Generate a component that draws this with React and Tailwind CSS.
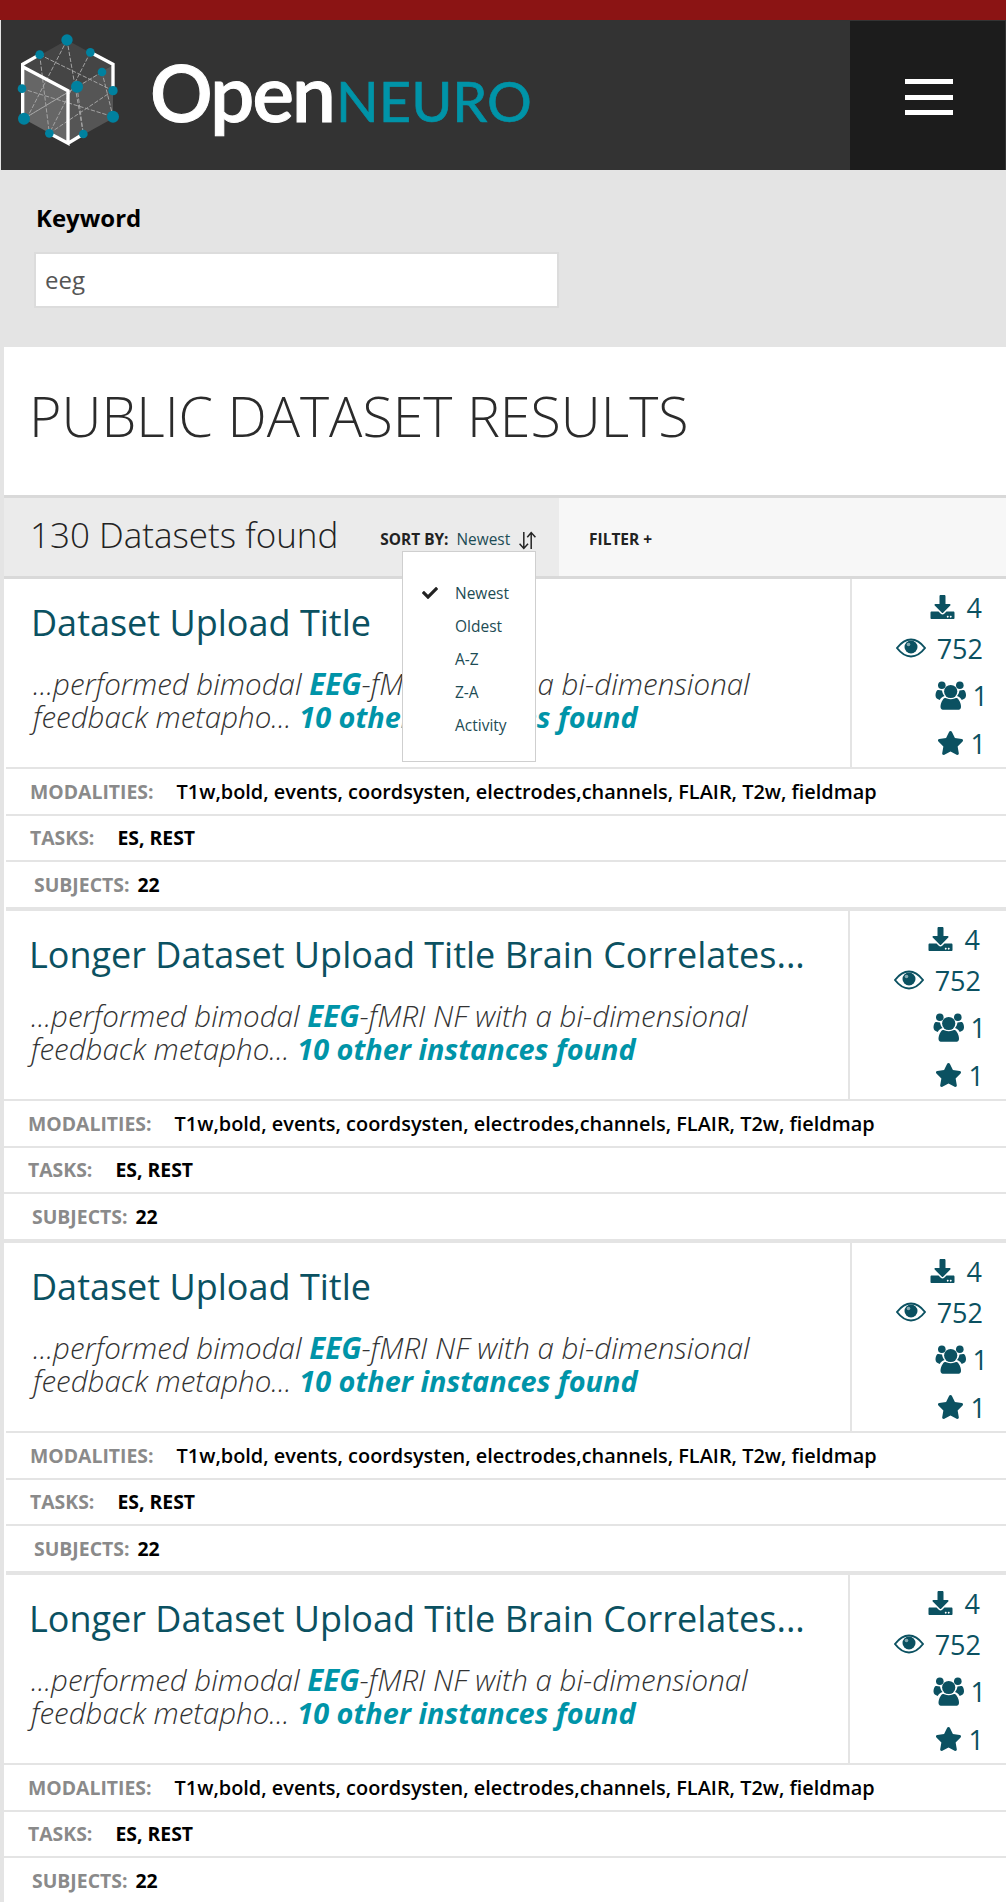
import React from "react";
import { FaDownload, FaStar, FaCheck } from "react-icons/fa";

function Logo() {
  const dashes = [
    "M201 60L80 296", "M201 60L250 342", "M119 104L148 340", "M119 104L339 212", "M271 97L148 340",
    "M306 156L72 296", "M306 156L339 290", "M66 206L339 290", "M72 296L231 200", "M339 212L148 340",
    "M231 200L250 342",
  ];
  const nodes = [
    [201, 60, 17], [119, 104, 13], [271, 97, 13], [306, 156, 13], [231, 200, 18], [339, 212, 14],
    [66, 206, 13], [72, 296, 18], [339, 290, 18], [148, 340, 13], [250, 342, 13],
  ];
  return (
    <svg viewBox="0 0 420 450" className="w-[140px] h-[150px] shrink-0 -ml-[1px]">
      <path d="M201 60L339 135L204 212L68 135Z" fill="#454545" />
      <path d="M68 140L204 212V370L68 295Z" fill="#666666" />
      <path d="M204 212L339 135V295L204 370Z" fill="#555555" />
      {dashes.map((d) => (
        <path key={d} d={d} stroke="#a3a3a3" strokeWidth="3" strokeDasharray="13 5" fill="none" />
      ))}
      <path
        d="M119 104L68 133V296M68 140L204 212V370L148 340M204 370L250 342M271 97L339 133V212"
        stroke="#ffffff"
        strokeWidth="10"
        fill="none"
      />
      {nodes.map(([x, y, r]) => (
        <circle key={x + "-" + y} cx={x} cy={y} r={r} fill="#00819f" />
      ))}
    </svg>
  );
}

function SortIcon() {
  return (
    <svg viewBox="0 0 18 18" className="w-[19px] h-[19px]" fill="none" stroke="#222" strokeWidth="1.4">
      <path d="M5.5 1V16M1.5 12L5.5 16.5L9.5 12" />
      <path d="M12.5 17V2M8.8 6L12.5 1.5L16.5 6" />
    </svg>
  );
}

function EyeIcon() {
  return (
    <svg viewBox="0 0 30 20" className="w-[30px] h-[20px]">
      <path
        d="M1 10C6 3.5 11 1.5 15 1.5S24 3.5 29 10C24 16.5 19 18.5 15 18.5S6 16.5 1 10Z"
        fill="none"
        stroke="currentColor"
        strokeWidth="2"
      />
      <circle cx="15" cy="9" r="6.5" fill="currentColor" />
      <circle cx="12.5" cy="6.5" r="1.8" fill="#ffffff" opacity="0.5" />
    </svg>
  );
}

function UsersIcon() {
  return (
    <svg viewBox="0 0 31 29" className="w-[31px] h-[29px]" fill="currentColor">
      <circle cx="15.7" cy="10.5" r="6.6" />
      <path d="M8 18.5C9 16.8 11 16.6 12 17.5C14 18.6 17.5 18.6 19.5 17.5C20.5 16.6 22.5 16.8 23.5 18.5C25.5 21 26 24 26 26C26 28 24.5 28.8 22.5 28.8H9C7 28.8 5.5 28 5.5 26C5.5 24 6 21 8 18.5Z" />
      <circle cx="6.8" cy="4.2" r="3.8" />
      <circle cx="24.8" cy="4.2" r="3.8" />
      <path d="M2 9.5C3 8.5 5 9.3 7 9.5C7.4 11.5 8 13.5 9.5 15C7 15.6 5.5 17.5 4.8 19C2.5 18.2 0.5 17 0.5 14.5C0.5 12.5 1 10.5 2 9.5Z" />
      <path d="M29.5 9.5C28.5 8.5 26.5 9.3 24.5 9.5C24.1 11.5 23.5 13.5 22 15C24.5 15.6 26 17.5 26.7 19C29 18.2 31 17 31 14.5C31 12.5 30.5 10.5 29.5 9.5Z" />
    </svg>
  );
}

function Stat({ h, icon, value, gap, pr }) {
  return (
    <div className={`flex items-center justify-end text-[27px] leading-none ${h} ${gap} ${pr}`}>
      {icon}
      <span>{value}</span>
    </div>
  );
}

function Card({ title, offset }) {
  return (
    <div className={offset ? "pl-[2px]" : ""}>
      <div className="flex">
        <div className="w-[846px] shrink-0 h-[188px] border-r-2 border-[#e4e4e4] pl-[25px] pt-[21px]">
          <div className="text-[#0b5161] text-[36px] leading-[46px] whitespace-nowrap">{title}</div>
          <div className="mt-[21px] pl-[2px] text-[29.5px] leading-[33px] italic font-light text-[#333333]">
            <div className="whitespace-nowrap">
              ...performed bimodal <b className="font-bold text-[#0094a8]">EEG</b>-fMRI NF with a bi-dimensional
            </div>
            <div className="whitespace-nowrap">
              <span className="tracking-[0.03px]">feedback metapho... </span>
              <b className="font-bold text-[28.9px] text-[#0094a8]">10 other instances found</b>
            </div>
          </div>
        </div>
        <div className="w-[138px] shrink-0 pt-[8px] flex flex-col items-end text-[#0b5161]">
          <Stat h="h-[40px]" pr="pr-[8px]" gap="gap-[11px]" icon={<FaDownload className="w-[27px] h-[24px]" />} value="4" />
          <Stat h="h-[42px]" pr="pr-[7px]" gap="gap-[11px]" icon={<EyeIcon />} value="752" />
          <Stat h="h-[52px]" pr="pr-[2px]" gap="gap-[7px]" icon={<UsersIcon />} value="1" />
          <Stat h="h-[44px]" pr="pr-[4px]" gap="gap-[7px]" icon={<FaStar className="w-[27px] h-[26px]" />} value="1" />
        </div>
      </div>
      <div className="text-[19.9px] font-semibold text-black">
        <div className="h-[47px] border-t-2 border-[#e4e4e4] pl-[24px] flex items-center gap-[23px] whitespace-nowrap">
          <span className="text-[19.4px] font-bold text-[#8a8a8a]">MODALITIES:</span>
          <span>T1w,bold, events, coordsysten, electrodes,channels, FLAIR, T2w, fieldmap</span>
        </div>
        <div className="h-[46px] border-t-2 border-[#e4e4e4] pl-[24px] flex items-center gap-[23px] text-[19.4px]">
          <span className="font-bold text-[#8a8a8a]">TASKS:</span>
          <span className="font-bold">ES, REST</span>
        </div>
        <div className="h-[47px] border-t-2 border-[#e4e4e4] pl-[28px] flex items-center gap-[8px] text-[19.4px]">
          <span className="font-bold text-[#8a8a8a]">SUBJECTS:</span>
          <span className="font-bold">22</span>
        </div>
      </div>
      <div className="h-[4px] bg-[#e4e4e4]" />
    </div>
  );
}

export default function App() {
  return (
    <div className="w-[1006px] h-[1902px] overflow-hidden bg-[#e4e4e4] font-['Open_Sans',sans-serif]">
      <div className="h-[20px] bg-[#8b1414]" />
      <div className="h-[150px] bg-[#333333] flex ml-[1px]">
        <Logo />
        <div className="flex items-baseline ml-[10px] mt-[33px] h-[110px] font-['Lato',sans-serif] leading-none">
          <span className="text-white text-[78px] font-semibold tracking-[-1.8px] [-webkit-text-stroke:1px_#ffffff]">Open</span>
          <span className="text-[#0094a8] text-[56px] font-normal ml-[2px] [-webkit-text-stroke:0.7px_#0094a8]">NEURO</span>
        </div>
        <div className="ml-auto w-[155px] mt-[1px] mr-[1px] bg-[#1c1c1c] flex flex-col items-center justify-center pl-[3px] pt-[3px]">
          <div className="w-[48px] h-[5px] bg-white" />
          <div className="w-[48px] h-[5px] bg-white mt-[11px]" />
          <div className="w-[48px] h-[5px] bg-white mt-[10px]" />
        </div>
      </div>
      <div className="h-[177px] pl-[36px] pt-[33px]">
        <div className="text-[24px] leading-[30px] font-bold text-black">Keyword</div>
        <div className="mt-[19px] -ml-[2px] w-[525px] h-[56px] bg-white border-2 border-[#dcdcdc] pl-[9px] flex items-center text-[24px] text-[#555555]">
          eeg
        </div>
      </div>
      <div className="ml-[4px] bg-white">
        <div className="h-[148px] pl-[25px] pb-[10px] flex items-center text-[55.5px] font-light text-[#2b2b2b] whitespace-nowrap">
          PUBLIC DATASET RESULTS
        </div>
        <div className="relative h-[84px] border-y-[3px] border-[#d9d9d9] flex bg-[#f7f7f7]">
          <div className="w-[555px] bg-[#ebebeb] pl-[26px] flex items-center">
            <span className="text-[35px] mb-[4px] font-light text-[#222222] whitespace-nowrap">130 Datasets found</span>
            <span className="ml-[42px] mt-[6px] text-[15.4px] font-bold text-[#222222] whitespace-nowrap">SORT BY:</span>
            <span className="ml-[8px] mt-[6px] text-[15.4px] text-[#1d4c55]">Newest</span>
            <span className="ml-[8px] mt-[6px]"><SortIcon /></span>
          </div>
          <div className="pl-[30px] pt-[6px] flex items-center text-[15.5px] font-bold text-[#222222]">FILTER +</div>
          <div className="absolute z-10 left-[398px] top-[53px] w-[134px] h-[211px] bg-white border border-[#cfcfcf] pt-[25px] text-[15.5px] text-[#1d4c55]">
            {["Newest", "Oldest", "A-Z", "Z-A", "Activity"].map((s, i) => (
              <div key={s} className="relative h-[33px] pl-[52px] flex items-center">
                {i === 0 && <FaCheck className="absolute left-[19px] top-[8px] w-[16px] h-[16px] text-[#222222]" />}
                {s}
              </div>
            ))}
          </div>
        </div>
        <Card offset title="Dataset Upload Title" />
        <Card title="Longer Dataset Upload Title Brain Correlates..." />
        <Card offset title="Dataset Upload Title" />
        <Card title="Longer Dataset Upload Title Brain Correlates..." />
      </div>
    </div>
  );
}
